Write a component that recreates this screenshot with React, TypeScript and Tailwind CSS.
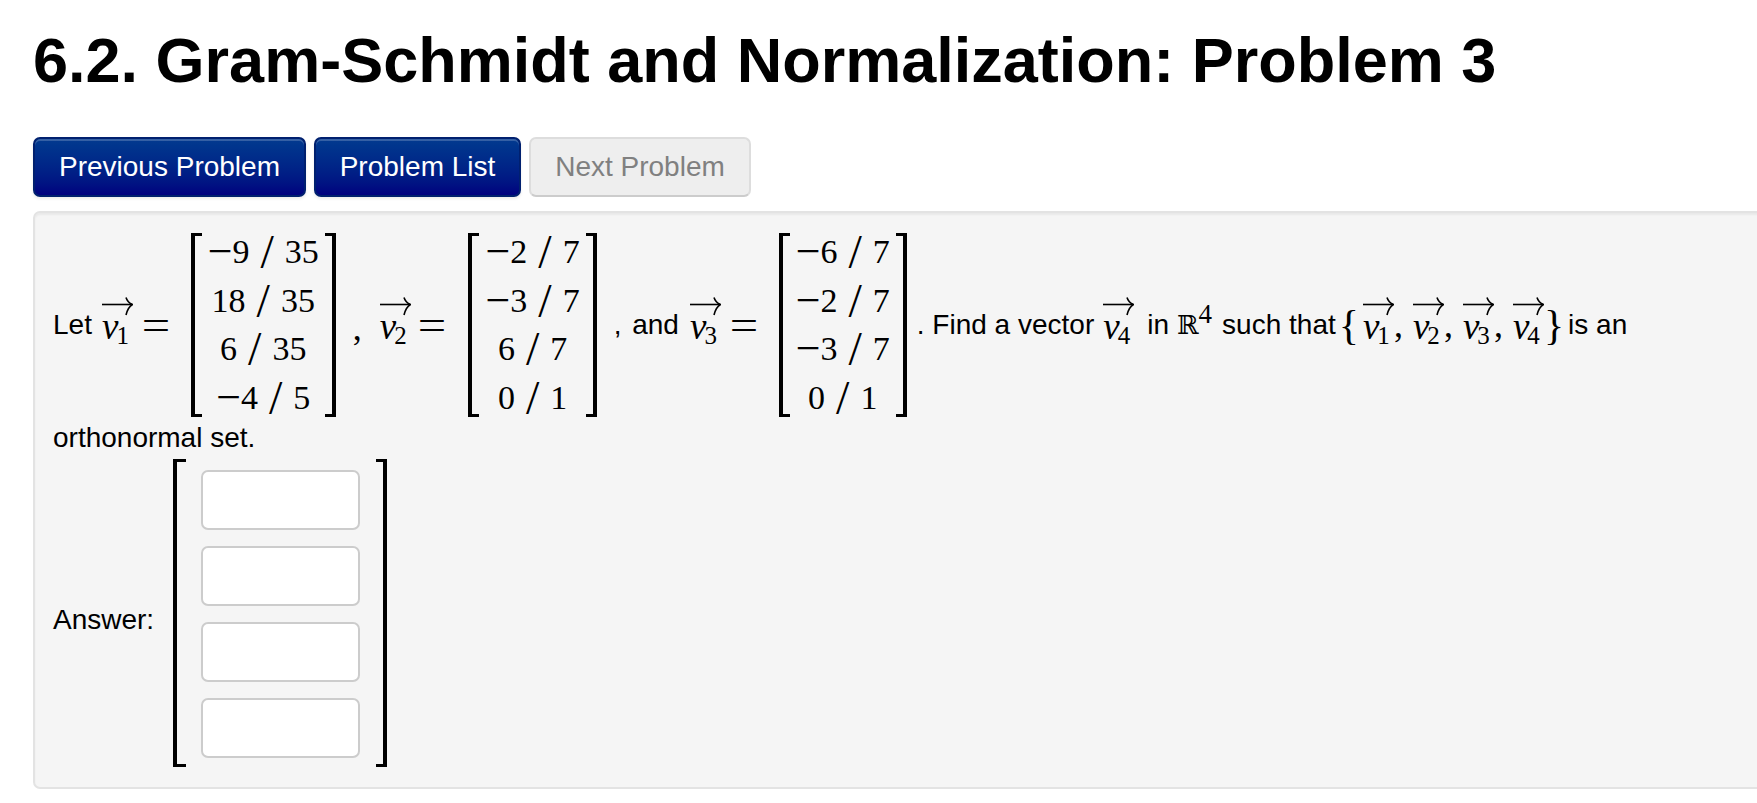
import React from 'react';

const serif = 'font-["Liberation_Serif",serif]';

function Vec({ n }: { n: number }) {
  return (
    <span className={`flex flex-col items-start w-[31px] shrink-0 mt-[-12px] ${serif}`}>
      <svg width="31" height="20" viewBox="0 0 31 20" fill="none" stroke="black" strokeWidth="1.6" className="shrink-0">
        <path d="M0 8.5H30" />
        <path d="M24 1.5Q25.5 6.5 30.5 8.5Q26 11 24 19" />
      </svg>
      <span className="flex items-baseline h-[30px] leading-[30px] mt-[-4px]">
        <span className="italic text-[37px]">v</span>
        <span className="text-[25px] relative top-[5px] ml-[-2px]">{n}</span>
      </span>
    </span>
  );
}

function Frac({ neg, a, b }: { neg?: boolean; a: string; b: string }) {
  return (
    <div className={`h-[48.7px] flex items-center justify-center text-[34px] leading-none whitespace-nowrap ${serif}`}>
      {neg && <span className="text-[44px]">−</span>}
      <span>{a}</span>
      <span className="text-[48px] mx-[11px]">/</span>
      <span>{b}</span>
    </div>
  );
}

function Bracket({ side, tick = 'w-[11px]' }: { side: 'l' | 'r'; tick?: string }) {
  return (
    <div
      className={`${tick} shrink-0 self-stretch border-y-[3px] border-black ${
        side === 'l' ? 'border-l-[4px]' : 'border-r-[4px]'
      }`}
    />
  );
}

function Matrix({ rows }: { rows: { neg?: boolean; a: string; b: string }[] }) {
  return (
    <div className="flex h-[184px] shrink-0">
      <Bracket side="l" />
      <div className="flex flex-col my-[-5px] px-[6px]">
        {rows.map((r, i) => (
          <Frac key={i} {...r} />
        ))}
      </div>
      <Bracket side="r" />
    </div>
  );
}

const Eq = ({ cls }: { cls: string }) => (
  <span className={`inline-block scale-x-[1.2] text-[42px] leading-none shrink-0 ${serif} ${cls}`}>=</span>
);

const Comma = ({ cls }: { cls: string }) => (
  <span className={`text-[36px] leading-none shrink-0 relative top-[3px] ${serif} ${cls}`}>,</span>
);

export default function App() {
  return (
    <div className='h-screen w-full overflow-hidden bg-white text-black font-["Liberation_Sans",Arial,sans-serif]'>
      <div className="pl-[33px] pt-[20px]">
        <h1 className="text-[63px] leading-[80px] font-bold">6.2. Gram-Schmidt and Normalization: Problem 3</h1>

        {/* Buttons */}
        <div className="flex gap-[8px] mt-[37px] text-[28px]">
          <button className="h-[60px] w-[273px] rounded-[7px] border-2 border-[#00206f] bg-gradient-to-b from-[#033a8f] to-[#00007f] text-white shadow-[inset_0_2px_0_rgba(255,255,255,0.2),0_2px_3px_rgba(0,0,0,0.08)]">
            Previous Problem
          </button>
          <button className="h-[60px] w-[207px] rounded-[7px] border-2 border-[#00206f] bg-gradient-to-b from-[#033a8f] to-[#00007f] text-white shadow-[inset_0_2px_0_rgba(255,255,255,0.2),0_2px_3px_rgba(0,0,0,0.08)]">
            Problem List
          </button>
          <button className="h-[60px] w-[222px] rounded-[7px] border-2 border-[#dddddd] border-b-[#cccccc] bg-[#eeeeee] text-[#808080]">
            Next Problem
          </button>
        </div>

        {/* Problem panel */}
        <div className="mt-[14px] w-[1800px] h-[578px] rounded-[7px] border-2 border-[#e3e3e3] bg-[#f5f5f5] shadow-[inset_0_2px_2px_rgba(0,0,0,0.05)] pl-[18px] pt-[20px] text-[28px] leading-[40px]">
          <div className="flex items-center h-[184px] whitespace-nowrap">
            <span>Let</span>
            <span className="ml-[10px] flex"><Vec n={1} /></span>
            <Eq cls="ml-[11px]" />
            <div className="ml-[23px]">
              <Matrix
                rows={[
                  { neg: true, a: '9', b: '35' },
                  { a: '18', b: '35' },
                  { a: '6', b: '35' },
                  { neg: true, a: '4', b: '5' },
                ]}
              />
            </div>
            <Comma cls="ml-[17px]" />
            <span className="ml-[18px] flex"><Vec n={2} /></span>
            <Eq cls="ml-[9px]" />
            <div className="ml-[25px]">
              <Matrix
                rows={[
                  { neg: true, a: '2', b: '7' },
                  { neg: true, a: '3', b: '7' },
                  { a: '6', b: '7' },
                  { a: '0', b: '1' },
                ]}
              />
            </div>
            <span className="ml-[17px] [word-spacing:3px]">, and</span>
            <span className="ml-[11px] flex"><Vec n={3} /></span>
            <Eq cls="ml-[11px]" />
            <div className="ml-[23px]">
              <Matrix
                rows={[
                  { neg: true, a: '6', b: '7' },
                  { neg: true, a: '2', b: '7' },
                  { neg: true, a: '3', b: '7' },
                  { a: '0', b: '1' },
                ]}
              />
            </div>
            <span className="ml-[10px]">. Find a vector</span>
            <span className="ml-[9px] flex"><Vec n={4} /></span>
            <span className="ml-[13px]">in</span>
            <span className='ml-[8px] font-["DejaVu_Serif",serif] text-[26px]'>ℝ</span>
            <span className={`text-[27px] relative top-[-11px] ${serif}`}>4</span>
            <span className="ml-[10px]">such that</span>
            <span className={`ml-[3px] mr-[4px] text-[42px] leading-none ${serif}`}>{'{'}</span>
            <Vec n={1} />
            <span className={`text-[36px] leading-none ${serif}`}>,</span>
            <span className="ml-[10px] flex"><Vec n={2} /></span>
            <span className={`text-[36px] leading-none ${serif}`}>,</span>
            <span className="ml-[10px] flex"><Vec n={3} /></span>
            <span className={`text-[36px] leading-none ${serif}`}>,</span>
            <span className="ml-[10px] flex"><Vec n={4} /></span>
            <span className={`text-[42px] leading-none ${serif}`}>{'}'}</span>
            <span className="ml-[4px]">is an</span>
          </div>

          <div className="mt-[1px]">orthonormal set.</div>

          <div className="flex items-center h-[308px] mt-[1px]">
            <span className="mt-[13px]">Answer:</span>
            <div className="flex self-stretch ml-[19px]">
              <Bracket side="l" tick="w-[13px]" />
              <div className="flex flex-col gap-[16px] justify-center pt-[1px] pl-[15px] pr-[16px]">
                {[0, 1, 2, 3].map((i) => (
                  <input
                    key={i}
                    type="text"
                    className="block h-[60px] w-[159px] rounded-[7px] border-2 border-[#cccccc] bg-white"
                  />
                ))}
              </div>
              <Bracket side="r" tick="w-[11px]" />
            </div>
          </div>
        </div>
      </div>
    </div>
  );
}
